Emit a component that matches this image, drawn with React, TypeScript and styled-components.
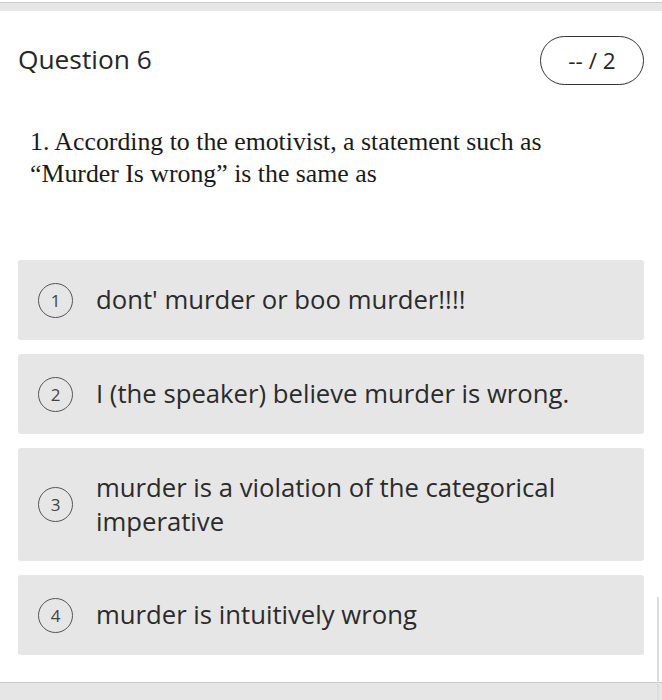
import styled, { createGlobalStyle } from "styled-components";

const GlobalStyle = createGlobalStyle`
  html, body {
    margin: 0;
    padding: 0;
    background: #ffffff;
  }
  body {
    font-family: "Open Sans", "Noto Sans", sans-serif;
    color: #333333;
  }
`;

interface Choice {
  label: string;
}

const choices: Choice[] = [
  { label: "dont' murder or boo murder!!!!" },
  { label: "I (the speaker) believe murder is wrong." },
  { label: "murder is a violation of the categorical imperative" },
  { label: "murder is intuitively wrong" },
];

const App = () => {
  return (
    <>
      <GlobalStyle />
      <Page>
        <TopBand />
        <Card>
          <Header>
            <Title>Question 6</Title>
            <Score>-- / 2</Score>
          </Header>
          <Prompt>
            1. According to the emotivist, a statement such as
            <br />
            “Murder Is wrong” is the same as
          </Prompt>
          <Choices>
            {choices.map((c, i) => (
              <Option key={i}>
                <Number>{i + 1}</Number>
                <OptionText>{c.label}</OptionText>
              </Option>
            ))}
          </Choices>
        </Card>
        <BottomBand />
        <ScrollTrack />
      </Page>
    </>
  );
};

export default App;

const Page = styled.div`
  position: relative;
  width: 662px;
  height: 700px;
  overflow: hidden;
  display: flex;
  flex-direction: column;
`;

const TopBand = styled.div`
  margin-top: 2px;
  height: 8px;
  background: #e6e6e6;
  border-top: 1px solid #cccccc;
`;

const Card = styled.div`
  padding: 0 18px;
  flex: 1;
`;

const Header = styled.div`
  display: flex;
  align-items: center;
  justify-content: space-between;
  margin-top: 25px;
  height: 49px;
`;

const Title = styled.h2`
  margin: 0 0 3px;
  font-weight: 400;
  font-size: 26.3px;
  color: #262626;
`;

const Score = styled.div`
  box-sizing: border-box;
  width: 104px;
  height: 49px;
  border: 1.5px solid #333333;
  border-radius: 25px;
  display: flex;
  align-items: center;
  justify-content: center;
  font-size: 22.5px;
  color: #262626;
`;

const Prompt = styled.p`
  margin: 41px 0 0 12px;
  font-family: "Liberation Serif", "Times New Roman", serif;
  font-size: 25.8px;
  line-height: 32px;
  color: #1a1a1a;
`;

const Choices = styled.div`
  margin-top: 70px;
  display: flex;
  flex-direction: column;
  gap: 14px;
`;

const Option = styled.div`
  display: flex;
  align-items: center;
  min-height: 79px;
  box-sizing: border-box;
  padding: 22.5px 20px;
  background: #e6e6e6;
  border-radius: 3px;
`;

const Number = styled.span`
  flex: none;
  box-sizing: border-box;
  width: 35px;
  height: 35px;
  border: 1.5px solid #555555;
  border-radius: 50%;
  display: flex;
  align-items: center;
  justify-content: center;
  font-size: 17px;
  color: #444444;
`;

const OptionText = styled.span`
  margin-left: 23px;
  font-size: 25.7px;
  line-height: 34px;
  color: #2b2b2b;
  max-width: 500px;
`;

const BottomBand = styled.div`
  height: 17px;
  background: #e6e6e6;
  border-top: 1px solid #c8c8c8;
`;

const ScrollTrack = styled.div`
  position: absolute;
  right: 3px;
  top: 597px;
  bottom: 0;
  width: 2px;
  background: #dddddd;
`;
